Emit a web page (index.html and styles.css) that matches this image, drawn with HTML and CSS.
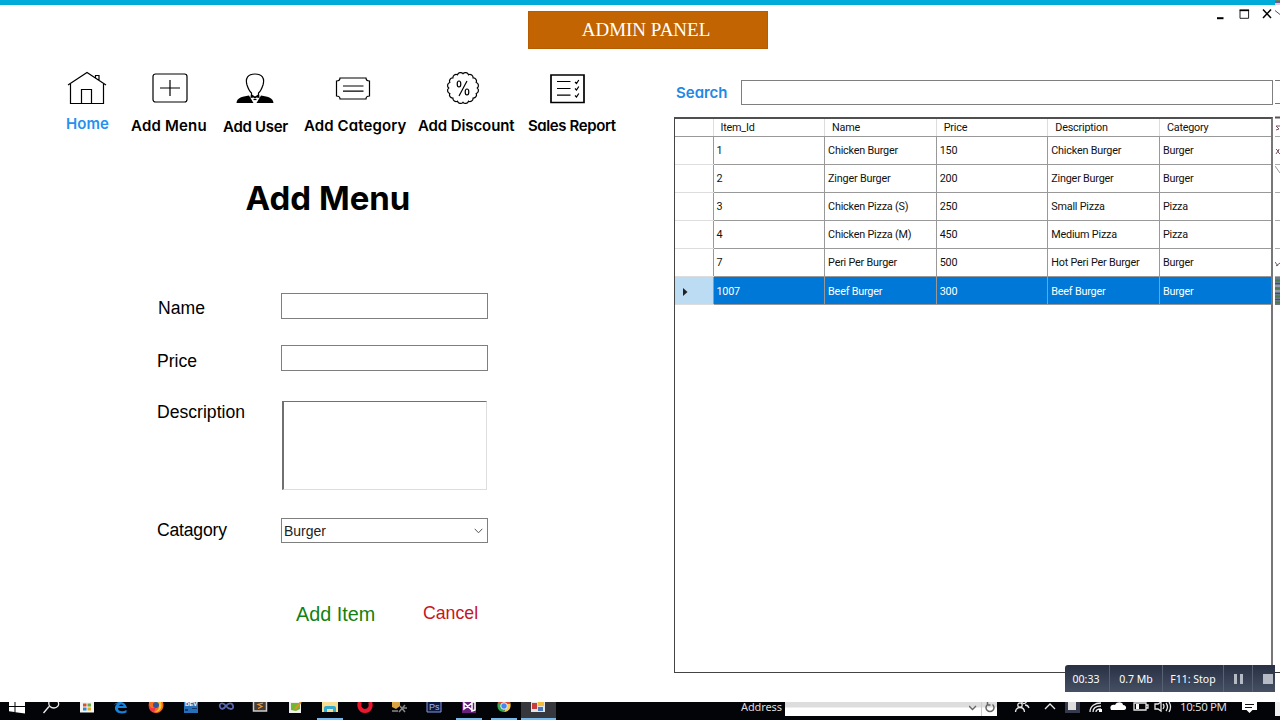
FILE: index.html
```html
<!DOCTYPE html>
<html lang="en">
<head>
  <meta charset="UTF-8" />
  <meta name="viewport" content="width=device-width, initial-scale=1.0" />
  <title>Admin Panel</title>
  <link rel="stylesheet" href="styles.css">
</head>
<body>
  <div class="window">
    <header class="titlebar">
      <h1>ADMIN PANEL</h1>
      <svg class="controls" width="60" height="14" viewBox="0 0 60 14">
        <path d="M1 11.2h6.5" stroke="#000" stroke-width="2" />
        <path d="M24 3.700h8.600v7.600H24z" fill="none" stroke="#222" />
        <path d="M23.500 3.200h9.600" stroke="#000" stroke-width="1.600" />
        <path d="M47 2.500l8 8.500M55 2.500l-8 8.500" stroke="#000" stroke-width="1.500" />
      </svg>
    </header>

    <main class="content">
      <section class="left">
        <nav class="toolbar">
          <a class="tool home" href="#">
            <svg width="40" height="36" viewBox="0 0 40 36">
              <path d="M1 15L20 2.500l19 12.500M3.500 14v19.500h33V14M14.500 33.500V19.500h10v14M28.500 8V5.500h3.500v5" />
            </svg>
            <span>Home</span>
          </a>
          <a class="tool menu" href="#">
            <svg width="36" height="36" viewBox="0 0 36 36">
              <rect x="1" y="4" width="34" height="28" rx="2.500" />
              <path d="M18 10v16M8 18h20" />
            </svg>
            <span>Add Menu</span>
          </a>
          <a class="tool user" href="#">
            <svg width="38" height="36" viewBox="0 0 38 36">
              <path d="M15.500 27v-4c-2.500-2-3.500-5-4.500-8C9 8 12 4 19 4s10 4 8 11c-1 3-2 6-4.500 8v4" />
              <path d="M.5 33c.5-5 5-6.500 12.500-7.500l4.500 7.500zM37.500 33c-.5-5-5-6.500-12.500-7.500L20.500 33zM15 24l4 2.500 4-2.500.5 4-3-.5-1.500 1-1.500-1-3 .5z" fill="#000" stroke="none" />
              <path d="M17.500 29.500h3" />
            </svg>
            <span>Add User</span>
          </a>
          <a class="tool category" href="#">
            <svg width="36" height="36" viewBox="0 0 36 36">
              <path d="M5 8h26c0 2 1 3 3.500 3v15c-2.500 0-3.500 1-3.500 3H5c0-2-1-3-3.500-3V11C4 11 5 10 5 8z" />
              <path d="M8 16h20.500M8 21.200h20.500" />
            </svg>
            <span>Add Category</span>
          </a>
          <a class="tool discount" href="#">
            <svg width="34" height="36" viewBox="0 0 34 36">
              <path d="M31.300 18a3.200 3.200 0 0 1-1.100 5.500a3.200 3.200 0 0 1-3.100 4.600a3.200 3.200 0 0 1-4.600 3.100a3.200 3.200 0 0 1-5.500 1.100a3.200 3.200 0 0 1-5.500-1.100a3.200 3.200 0 0 1-4.600-3.100a3.200 3.200 0 0 1-3.100-4.600a3.200 3.200 0 0 1-1.100-5.500a3.200 3.200 0 0 1 1.100-5.500a3.200 3.200 0 0 1 3.100-4.600a3.200 3.200 0 0 1 4.600-3.100a3.200 3.200 0 0 1 5.500-1.100a3.200 3.200 0 0 1 5.500 1.100a3.200 3.200 0 0 1 4.600 3.100a3.200 3.200 0 0 1 3.100 4.600a3.200 3.200 0 0 1 1.100 5.500z" />
              <path d="M21 11L13 26" />
              <ellipse cx="13" cy="14" rx="1.800" ry="3" />
              <ellipse cx="21" cy="22" rx="1.800" ry="3" />
            </svg>
            <span>Add Discount</span>
          </a>
          <a class="tool report" href="#">
            <svg width="36" height="36" viewBox="0 0 36 36">
              <path d="M2 5h33v27.500H2z" stroke-width="1.700" />
              <path d="M8 11.500h13.500M8 18.500h13.500M8 25.200h13.500M26 12l1.500 1.500 2.300-3.500M26 18.500l1.500 1.500 2.300-3.500M26 25.500l1.500 1.500 2.300-3.500" />
            </svg>
            <span>Sales Report</span>
          </a>
        </nav>

        <h2>Add Menu</h2>

        <form class="menu-form">
          <label class="lbl-name" for="name">Name</label>
          <input id="name" type="text">
          <label class="lbl-price" for="price">Price</label>
          <input id="price" type="text">
          <label class="lbl-desc" for="desc">Description</label>
          <textarea id="desc"></textarea>
          <label class="lbl-cat">Catagory</label>
          <div class="combo">
            <span>Burger</span>
            <svg width="9" height="6" viewBox="0 0 9 6"><path d="M.7.8l3.800 4 3.800-4" fill="none" stroke="#555" /></svg>
          </div>
          <div class="actions">
            <a class="add" href="#">Add Item</a>
            <a class="cancel" href="#">Cancel</a>
          </div>
        </form>
      </section>

      <section class="right">
        <div class="search">
          <label for="search">Search</label>
          <input id="search" type="text">
        </div>
        <div class="grid-box">
          <table>
            <thead>
              <tr><th class="mark"></th><th>Item_Id</th><th>Name</th><th>Price</th><th>Description</th><th>Category</th></tr>
            </thead>
            <tbody>
              <tr><td class="mark"></td><td>1</td><td>Chicken Burger</td><td>150</td><td>Chicken Burger</td><td>Burger</td></tr>
              <tr><td class="mark"></td><td>2</td><td>Zinger Burger</td><td>200</td><td>Zinger Burger</td><td>Burger</td></tr>
              <tr><td class="mark"></td><td>3</td><td>Chicken Pizza (S)</td><td>250</td><td>Small Pizza</td><td>Pizza</td></tr>
              <tr><td class="mark"></td><td>4</td><td>Chicken Pizza (M)</td><td>450</td><td>Medium Pizza</td><td>Pizza</td></tr>
              <tr><td class="mark"></td><td>7</td><td>Peri Per Burger</td><td>500</td><td>Hot Peri Per Burger</td><td>Burger</td></tr>
              <tr class="selected"><td class="mark"><svg width="5" height="8" viewBox="0 0 5 8"><path d="M0 0l4.500 4L0 8z" fill="#222" /></svg></td><td>1007</td><td>Beef Burger</td><td>300</td><td>Beef Burger</td><td>Burger</td></tr>
            </tbody>
          </table>
        </div>
      </section>
    </main>

    <footer class="taskbar">
      <div class="apps">
        <span class="app"><svg viewBox="0 0 34 18"><path d="M9 0h5.500v4H9zM9 5h5.500v5L9 9.300zM15.500 0H25v4h-9.500zM15.500 5H25v6.500l-9.500-1.300z" fill="#fff" /></svg></span>
        <span class="app"><svg viewBox="0 0 34 18"><path d="M14 0c-1 4 2 6 5 6s6-3 4-6M14 4.500L8.500 11" fill="none" stroke="#eee" stroke-width="1.300" /></svg></span>
        <span class="app"><svg viewBox="0 0 34 18"><path d="M10 0h14v10.500H10z" fill="#f4f4f4" /><path d="M13 1.500h3.500v3H13z" fill="#d8522e" /><path d="M17.500 1.500H21v3h-3.500z" fill="#69a842" /><path d="M13 5.500h3.500v3H13z" fill="#268fd0" /><path d="M17.500 5.500H21v3h-3.500z" fill="#e8ac24" /></svg></span>
        <span class="app"><svg viewBox="0 0 34 18"><path d="M10 3c3-4 11-5 13 3H14c0 4 5 4 8.500 2v2.500C17 13 10 11 11 5c1-3 3-4 3-4" fill="#1782d8" /><path d="M15 4h4.500c-.8-2-3.500-2-4.500 0z" fill="#030408" /></svg></span>
        <span class="app"><svg viewBox="0 0 34 18"><path d="M10 0c-1 7 2 11 7 11s9-5 7-11z" fill="#f36d22" /><path d="M10 2c1 5 4 5 7 3l-2 5c-4-1-6-4-5-8z" fill="#f52f4d" /><path d="M16 0h6c2 5-1 10-6 10 6-3 4-7 0-10z" fill="#ffc62e" /><circle cx="17" cy="3" r="3" fill="#31559f" /></svg></span>
        <span class="app"><svg viewBox="0 0 34 18"><path d="M10 0h14v11H10z" fill="#2770b7" /><text x="11" y="4" font-size="6" font-weight="bold" fill="#fff">DEV</text><path d="M11 7h3v2h-3zM18 6h5v1h-5z" fill="#123c70" /></svg></span>
        <span class="app"><svg viewBox="0 0 34 18"><path d="M17 4c-4-5-7-2-6 1s4 2 6-1 6-4 7 0-4 4-7 0z" fill="none" stroke="#5866ae" stroke-width="1.800" /></svg></span>
        <span class="app"><svg viewBox="0 0 34 18"><path d="M10.500 0v9h13V0" fill="#453d36" stroke="#ccc" stroke-width="1.500" /><path d="M20 1l-5 1.500 4 2-4 2" fill="none" stroke="#ee9634" stroke-width="1.200" /></svg></span>
        <span class="app"><svg viewBox="0 0 34 18"><path d="M11 0h12v11H11z" fill="#eee" /><path d="M13 1h9v6l-4 2-5-1z" fill="#71b832" /><path d="M23 0l-6 7" stroke="#d79526" stroke-width="2" /></svg></span>
        <span class="app running"><svg viewBox="0 0 34 18"><path d="M9 0h16v10H9z" fill="#f8dc92" /><path d="M11 10V6q0-2 2-2h8q2 0 2 2v4h-3V7h-6v3z" fill="#35aacd" /></svg></span>
        <span class="app"><svg viewBox="0 0 34 18"><path d="M12 0c-2 5 1 9 5 9s7-4 5-9" fill="none" stroke="#e9182d" stroke-width="4" /></svg></span>
        <span class="app"><svg viewBox="0 0 34 18"><path d="M10 0h8v4l-4 3-4-2z" fill="#d8a340" /><path d="M10 9h6M18 4l5 6M23 3l-6 7M20 6h5" fill="none" stroke="#888" stroke-width="1.500" /></svg></span>
        <span class="app"><svg viewBox="0 0 34 18"><path d="M10 0v10h14V0" fill="#0b1940" stroke="#8399df" /><text x="12" y="7.500" font-size="9" fill="#9eb4ff">Ps</text></svg></span>
        <span class="app running"><svg viewBox="0 0 34 18"><path d="M10 0h14v11H10z" fill="#68217a" /><path d="M12 1v6l8-6v7zM20 0v9l3-1V0z" fill="none" stroke="#fff" stroke-width="1.500" /></svg></span>
        <span class="app running"><svg viewBox="0 0 34 18"><path d="M11 0c-2 6 1 10 6 10l2-6z" fill="#35a853" /><path d="M23 0c2 5-1 10-6 10l3-7V0z" fill="#fbcb43" /><path d="M11 0h12v2H12z" fill="#df4936" /><circle cx="17" cy="4" r="3.300" fill="#4386f5" stroke="#eee" /></svg></span>
        <span class="app running active"><svg viewBox="0 0 34 18"><path d="M10 0h14v10H10z" fill="#e4e4e4" /><path d="M11 1h5v6h-5z" fill="#c83e3d" /><path d="M17 0h6v4h-6z" fill="#f2bd38" /><path d="M17 5h5v4h-5z" fill="#4976bb" /></svg></span>
      </div>
      <div class="address">
        <span>Address</span>
        <div class="address-box">
          <svg width="28" height="14" viewBox="0 0 28 14">
            <path d="M0 4l3.500 3.500L7 4" fill="none" stroke="#666" stroke-width="1.400" />
            <path d="M12.500 0v14" stroke="#ccc" />
            <path d="M18.500 2.500a4 4 0 1 0 5 0M18.500 0v3h3" fill="none" stroke="#666" stroke-width="1.500" />
          </svg>
        </div>
      </div>
      <svg class="tray" width="166" height="18" viewBox="0 0 166 18">
        <g fill="none" stroke="#e6e6e6" stroke-width="1.300">
          <circle cx="11" cy="3" r="2.200" /><path d="M6.500 10c.5-6 8.500-6 9 0M12.500 0q2 3 5 0M16 3q3 0 4 3" />
          <path d="M36 7l5-5 5 5" />
          <path d="M81 10c0-6 5-9 11-9M84 10c0-4 3-6 8-6M87 10c0-2 2-3 5-3" />
          <path d="M125 1h12v7h-12zM137 3h2v3h-2" />
          <path d="M146 2h3l3-2v9l-3-2h-3zM154 2q2 2 0 5M157 1q3 4 0 8M160 0q3 5 0 10" />
        </g>
        <path d="M56 0h15v11H56z" fill="#353b4c" /><path d="M59 0h8v8h-8z" fill="#ddd" />
        <path d="M102 8c-2-4 1-6 4-5 2-4 8-3 8 0 4 0 4 5 1 5z" fill="#fff" />
        <path d="M127 2h3v5h-3zM90 7h3v3h-3z" fill="#fff" />
      </svg>
      <time>10:50 PM</time>
      <svg class="notify" width="18" height="14" viewBox="0 0 18 14"><path d="M1 0h15v8h-4.500L8.500 11l-3-3H1z" fill="#fff" /><path d="M4 2.500h9M4 5.500h7" stroke="#111" /></svg>
      <span class="show-desktop"></span>
    </footer>
  </div>

  <!-- screen recorder -->
  <div class="recorder">
    <span class="time">00:33</span>
    <span class="size">0.7 Mb</span>
    <span class="stop">F11: Stop</span>
    <span class="pause"><i></i><i></i></span>
    <span class="end"><b></b></span>
  </div>

  <!-- sliver at the screen edge -->
  <svg class="edge" width="5" height="702" viewBox="0 0 5 702">
    <path d="M0 0h5v702H0z" fill="#fff" />
    <path d="M0 .5h5" stroke="#5c8a5a" /><path d="M0 2h5" stroke="#7359a8" stroke-width="2" /><path d="M0 4h5" stroke="#c99ab0" />
    <path d="M0 10.500l5 4" stroke="#634669" />
    <path d="M0 80.500h5M0 103.500h5" stroke="#777" />
    <path d="M0 117.500h5" stroke="#555" stroke-width="2" />
    <path d="M0 136.500h5M0 164.500h5M0 192.500h5M0 220.500h5M0 248.500h5M0 276.500h5" stroke="#aaa" />
    <path d="M5 126H1l3 3-3 1M1 149l2 2-2 3M4 149l-1 3 2 2M0 262l3 4M1 266l4-3" fill="none" stroke="#775461" />
    <path d="M0 166l5 7" stroke="#999" />
    <path d="M0 277h5v28H0z" fill="#6a7890" />
    <path d="M0 280.500h5M0 288.500h5M0 296.500h5M0 302.500h5" stroke="#4c7a48" stroke-width="2" />
    <path d="M0 283.500h5M0 293.500h5M0 299.500h5" stroke="#7b3461" />
    <path d="M0 291h5M0 286h5" stroke="#c3b8c9" />
    <path d="M0 672.500h5" stroke="#333" />
  </svg>
</body>
</html>
```

FILE: styles.css
```css
* { margin: 0; padding: 0; box-sizing: border-box; }
body {
  width: 1280px;
  height: 720px;
  overflow: hidden;
  background: #fff;
  color: #000;
  font-family: 'Liberation Sans', Arial, sans-serif;
}
a { text-decoration: none; color: inherit; }
svg { display: block; flex-shrink: 0; }

.window {
  display: flex;
  flex-direction: column;
  height: 720px;
  border-top: 5px solid #00abda;
}

/* Title bar */
.titlebar {
  display: grid;
  grid-template-columns: 528px 240px 1fr;
  height: 61px;
  padding-top: 6px;
}
.titlebar h1 {
  grid-column: 2;
  height: 38px;
  background: #c26402;
  border: 1px solid #b65d02;
  color: #fff;
  font: 400 19px/35px 'Liberation Serif', 'Times New Roman', serif;
  text-align: center;
  padding-right: 4px;
}
.controls { justify-self: end; margin-right: 4px; margin-top: -4px; }

.content { display: flex; height: 636px; flex-shrink: 0; }
.left { width: 674px; }
.right { width: 599px; }

/* Toolbar */
.toolbar {
  display: grid;
  grid-template-columns: 65px 92px 81px 114px 110px 90px;
  padding-left: 66px;
  padding-top: 4px;
  height: 74px;
}
.tool {
  font: 600 15px/18px Inter, sans-serif;
  font-feature-settings: 'cv11';
  white-space: nowrap;
}
.tool svg { fill: none; stroke: #000; stroke-width: 1.2; }
.tool span { display: block; margin-top: 11px; }
.home { color: #2491f0; letter-spacing: 0.1px; }
.home svg { margin-left: 1px; }
.home span { margin-top: 9px; }
.menu { letter-spacing: 0.2px; }
.menu svg { margin-left: 21px; }
.user { letter-spacing: -0.3px; }
.user svg { margin-left: 13px; }
.user span { margin-top: 12px; }
.category { letter-spacing: 0.1px; }
.category svg { margin-left: 31px; }
.discount { letter-spacing: -0.1px; }
.discount svg { margin-left: 28px; }
.report { letter-spacing: -0.4px; }
.report svg { margin-left: 21px; }

.left h2 {
  width: 656px;
  margin-top: 36px;
  text-align: center;
  font: 700 33px/44px Inter, sans-serif;
  font-feature-settings: 'cv11';
}

/* Form */
.menu-form {
  display: grid;
  grid-template-columns: 124px 207px;
  grid-template-rows: 52px 55px 118px 72px 50px;
  padding-left: 157px;
  margin-top: 73px;
  font-size: 17.6px;
  line-height: 22px;
}
.menu-form label { padding-top: 5px; }
.menu-form .lbl-name { padding-left: 1px; padding-top: 4px; }
.menu-form .lbl-desc { padding-top: 1px; }
.menu-form .lbl-cat { padding-top: 1px; letter-spacing: -0.2px; }
input { border: 1px solid #7f7f7f; background: #fff; outline: none; }
.menu-form input { width: 207px; height: 26px; }
textarea {
  width: 205px;
  height: 89px;
  margin: 1px 0 0 1px;
  border: 1px solid #ddd;
  border-top: 1px solid #707070;
  border-left: 2px solid #707070;
  resize: none;
}
.combo {
  display: flex;
  justify-content: space-between;
  align-items: center;
  height: 25px;
  border: 1px solid #7f7f7f;
  padding: 0 4px 0 2px;
  font-size: 14px;
  color: #222;
}
.actions { grid-column: 2; display: flex; padding: 13px 0 0 15px; }
.add { width: 127px; font-size: 19.8px; color: #128012; }
.cancel { font-size: 17.7px; color: #c8141e; margin-top: -1px; }

/* Search */
.search { display: flex; padding-top: 14px; height: 51px; }
.search label {
  width: 67px;
  padding-left: 2px;
  color: #2288e5;
  font: 600 15px/26px Inter, sans-serif;
  font-feature-settings: 'cv11';
}
.search input { width: 532px; height: 25px; }

/* Data grid */
.grid-box {
  height: 556px;
  border: 1px solid #444;
  border-top: 2px solid #505050;
  border-right: 2px solid #777;
}
table {
  width: 596px;
  table-layout: fixed;
  border-collapse: collapse;
  font: 10.8px/14px Roboto, sans-serif;
  letter-spacing: -0.2px;
  color: #111;
}
th { height: 17px; padding: 2px 0 0 7px; text-align: left; font-weight: 400; border-right: 1px solid #ddd; border-bottom: 1px solid #999; }
td { height: 28.100px; padding: 2px 0 0 3px; border: 1px solid #999; }
.mark { width: 38px; padding-left: 8px; border-left: none; }
td.mark { border-top-color: #ddd; border-bottom-color: #ddd; }
td:last-child { border-right: none; }
th:last-child { border-right: none; }
.selected td { background: #0078d7; color: #fff; }
.selected .mark { background: #bcdcf4; }

/* Taskbar */
.taskbar {
  display: flex;
  height: 18px;
  margin-top: auto;
  background: #030408;
  color: #ddd;
}
.apps { display: flex; width: 741px; }
.app { width: 34.750px; height: 18px; }
.app svg { width: 34px; height: 18px; }
.app text { font-family: 'Liberation Sans', sans-serif; }
.running { background: linear-gradient(#76b9ed, #76b9ed) 50% 100% / 26px 2px no-repeat; }
.active { background: linear-gradient(#36383d 0 16px, #76b9ed 16px); }
.address { display: flex; width: 256px; font: 11px/9px 'Noto Sans', sans-serif; }
.address > span { width: 44px; letter-spacing: -0.1px; }
.address-box {
  display: flex;
  justify-content: flex-end;
  width: 212px;
  height: 14px;
  background: linear-gradient(#ddd 0 5px, #fff 6px);
}
.tray { margin-left: 12px; }
time { width: 64px; margin-left: 5px; font: 11.500px/9px 'Noto Sans', sans-serif; letter-spacing: -0.4px; white-space: nowrap; }
.notify { margin-left: -3px; }
.show-desktop { width: 5px; height: 14px; margin-left: auto; background: #eee; }

/* Floating recorder bar */
.recorder {
  position: absolute;
  left: 1065px;
  top: 665px;
  display: flex;
  width: 210px;
  height: 27px;
  border-radius: 3px 0 0 0;
  background: linear-gradient(#283044, #465063);
  color: #fff;
  font: 10.500px/29px 'Noto Sans', sans-serif;
}
.recorder span { border-right: 1px solid #586174; text-align: center; white-space: nowrap; }
.recorder .time { width: 45px; padding-right: 2px; }
.recorder .size { width: 53px; }
.recorder .stop { width: 61px; }
.recorder .pause { width: 29px; display: flex; gap: 3px; justify-content: center; align-items: center; }
.pause i { width: 3px; height: 10px; background: #b5bac5; }
.recorder .end { width: 22px; padding-right: 2px; border: none; display: flex; justify-content: flex-end; align-items: center; }
.end b { width: 10px; height: 10px; background: #b5bac5; }

.edge { position: absolute; left: 1275px; top: 0; }
```
